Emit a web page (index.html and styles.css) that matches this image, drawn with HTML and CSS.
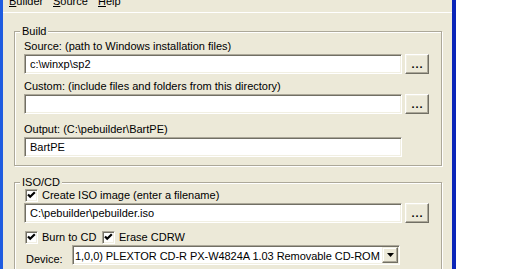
FILE: index.html
```html
<!DOCTYPE html>
<html>
<head>
<meta charset="utf-8">
<link rel="stylesheet" href="styles.css">
</head>
<body>
<div class="window">
  <div class="menubar">
    <span class="menu m-builder"><u>B</u>uilder</span>
    <span class="menu m-source"><u>S</u>ource</span>
    <span class="menu m-help"><u>H</u>elp</span>
  </div>
  <div class="client">
    <fieldset class="group build">
      <legend>Build</legend>
      <div class="field f1">
        <div class="lbl">Source: (path to Windows installation files)</div>
        <div class="row">
          <div class="edit">c:\winxp\sp2</div>
          <button class="browse">...</button>
        </div>
      </div>
      <div class="field f2">
        <div class="lbl">Custom: (include files and folders from this directory)</div>
        <div class="row">
          <div class="edit"></div>
          <button class="browse">...</button>
        </div>
      </div>
      <div class="field f3">
        <div class="lbl">Output: (C:\pebuilder\BartPE)</div>
        <div class="row">
          <div class="edit">BartPE</div>
        </div>
      </div>
    </fieldset>
    <fieldset class="group iso">
      <legend>ISO/CD</legend>
      <div class="checkrow">
        <span class="check"><svg width="13" height="13" viewBox="0 0 13 13"><path d="M3 5.5 L5.2 7.8 L9.8 3.2" fill="none" stroke="#000" stroke-width="2.2"/></svg></span>
        <span>Create ISO image (enter a filename)</span>
      </div>
      <div class="row isorow">
        <div class="edit">C:\pebuilder\pebuilder.iso</div>
        <button class="browse">...</button>
      </div>
      <div class="checkrow burn">
        <span class="item first">
          <span class="check"><svg width="13" height="13" viewBox="0 0 13 13"><path d="M3 5.5 L5.2 7.8 L9.8 3.2" fill="none" stroke="#000" stroke-width="2.2"/></svg></span>
          <span>Burn to CD</span>
        </span>
        <span class="item">
          <span class="check"><svg width="13" height="13" viewBox="0 0 13 13"><path d="M3 5.5 L5.2 7.8 L9.8 3.2" fill="none" stroke="#000" stroke-width="2.2"/></svg></span>
          <span>Erase CDRW</span>
        </span>
      </div>
      <div class="devrow">
        <span class="devlbl">Device:</span>
        <div class="select">
          <span class="seltext">1,0,0) PLEXTOR CD-R PX-W4824A 1.03 Removable CD-ROM</span>
          <span class="drop"><svg width="7" height="4" viewBox="0 0 7 4"><path d="M0 0 H7 L3.5 4 Z" fill="#000"/></svg></span>
        </div>
      </div>
    </fieldset>
  </div>
</div>
</body>
</html>
```
FILE: styles.css
```css
html, body {
  margin: 0;
  padding: 0;
}
body {
  width: 512px;
  height: 269px;
  overflow: hidden;
  background: #fff;
  font-family: "Liberation Sans", Arial, sans-serif;
  font-size: 11px;
  color: #000;
}
.window {
  width: 449px;
  height: 269px;
  border-left: 3px solid #1f5ce0;
  border-right: 4px solid #0a25b8;
  background: #ECE9D8;
  overflow: hidden;
}
.menubar {
  height: 12px;
  border-bottom: 1px solid #fff;
  overflow: hidden;
  display: flex;
  padding-left: 6px;
}
.menu {
  line-height: 13px;
  margin-top: -5px;
  white-space: nowrap;
}
.m-builder { width: 44px; }
.m-source { width: 45px; }
.menu u {
  text-decoration: underline;
}
.client {
  padding: 12px 0 0 11px;
}
.group {
  box-sizing: border-box;
  width: 428px;
  margin: 0;
  min-width: 0;
  border: 1px solid #ACA899;
  box-shadow: 1px 1px 0 #fff, inset 1px 1px 0 #fff;
  padding: 2px 8px 8px 9px;
}
.group legend {
  padding: 0 2px;
  margin-left: -4px;
  line-height: 13px;
  background: #ECE9D8;
}
.build {
  height: 141px;
}
.iso {
  margin-top: 10px;
  padding-top: 0;
  height: 140px;
}
.lbl {
  line-height: 13px;
  margin-bottom: 1px;
  white-space: nowrap;
}
.f2 { margin-top: 6px; }
.f3 { margin-top: 9px; }
.row {
  display: flex;
  gap: 3px;
}
.edit {
  box-sizing: border-box;
  width: 378px;
  height: 20px;
  border: 1px solid;
  border-color: #ACA899 #fff #fff #ACA899;
  box-shadow: inset 1px 1px 0 #716F64, inset -1px -1px 0 #F1EFE2;
  background: #fff;
  padding-left: 5px;
  line-height: 18px;
  white-space: nowrap;
}
.browse {
  box-sizing: border-box;
  width: 24px;
  height: 20px;
  margin: 0;
  padding: 0 0 0 1px;
  border: 1px solid;
  border-color: #fff #716F64 #716F64 #fff;
  box-shadow: inset -1px -1px 0 #ACA899, inset 1px 1px 0 #F1EFE2;
  background: #ECE9D8;
  font: inherit;
  font-size: 11px;
  font-weight: bold;
  letter-spacing: 1px;
  line-height: 16px;
  color: #000;
}
.checkrow {
  display: flex;
  align-items: center;
  height: 13px;
  line-height: 13px;
  padding-left: 1px;
  white-space: nowrap;
}
.checkrow .item {
  display: flex;
  align-items: center;
}
.checkrow .item.first {
  width: 77px;
}
.check {
  box-sizing: border-box;
  width: 13px;
  height: 13px;
  margin-right: 4px;
  border: 1px solid;
  border-color: #ACA899 #fff #fff #ACA899;
  box-shadow: inset 1px 1px 0 #716F64, inset -1px -1px 0 #F1EFE2;
  background: #fff;
  display: flex;
  flex-shrink: 0;
}
.check svg {
  margin: -1px;
}
.isorow {
  margin-top: 1px;
}
.burn {
  margin-top: 8px;
}
.devrow {
  display: flex;
  align-items: flex-end;
  margin-top: 1px;
}
.devlbl {
  width: 46px;
  padding-left: 2px;
  line-height: 13px;
  margin-bottom: -1px;
}
.select {
  box-sizing: border-box;
  width: 328px;
  height: 20px;
  border: 1px solid;
  border-color: #ACA899 #fff #fff #ACA899;
  box-shadow: inset 1px 1px 0 #716F64, inset -1px -1px 0 #F1EFE2;
  background: #fff;
  padding: 1px;
  display: flex;
  align-items: center;
}
.seltext {
  flex: 1;
  padding-left: 1px;
  padding-top: 2px;
  line-height: 13px;
  white-space: nowrap;
  overflow: hidden;
  letter-spacing: -0.05px;
}
.drop {
  box-sizing: border-box;
  width: 16px;
  height: 16px;
  border: 1px solid;
  border-color: #F1EFE2 #716F64 #716F64 #F1EFE2;
  box-shadow: inset -1px -1px 0 #ACA899, inset 1px 1px 0 #fff;
  background: #ECE9D8;
  display: flex;
  align-items: center;
  justify-content: center;
}
```
